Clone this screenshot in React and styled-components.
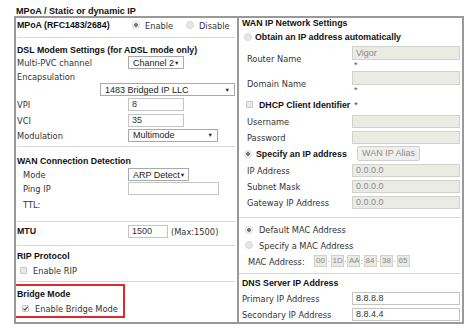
import React from 'react'
import styled, { createGlobalStyle } from 'styled-components'

const GlobalStyle = createGlobalStyle`
  html, body { margin: 0; padding: 0; background: #fff; }
  body { width: 474px; height: 333px; overflow: hidden; }
`

const arial = `'Liberation Sans', Arial, sans-serif`
const verdana = `'DejaVu Sans Condensed', 'DejaVu Sans', Verdana, sans-serif`

const Page = styled.div`
  padding: 7px 0 0 14px;
`

const Title = styled.div`
  font-family: ${arial};
  font-weight: bold;
  font-size: 9.1px;
  line-height: 9px;
  height: 9px;
  padding-left: 2px;
  color: #111;
`

const Table = styled.div`
  display: grid;
  grid-template-columns: 223px 225px;
  width: 450px;
  height: 308px;
  box-sizing: border-box;
  border: 1px solid #999;
`

const Cell = styled.div`
  border: 1px solid #999;
  overflow: hidden;
`

const Section = styled.div`
  position: relative;
  box-sizing: border-box;
  height: ${p => p.$h}px;
  padding-top: ${p => p.$pt || 0}px;
  margin: 0 ${p => p.$mr || 2}px 0 ${p => p.$ml || 0}px;
  border-bottom: ${p => (p.$last ? 'none' : '1px solid #d6d6d6')};
`

const Row = styled.div`
  display: flex;
  align-items: center;
  height: ${p => p.$h || 14}px;
  padding-left: ${p => p.$indent || 0}px;
`

const Heading = styled.span`
  font-family: ${arial};
  font-weight: bold;
  font-size: 8.8px;
  color: #111;
  white-space: nowrap;
`

const Label = styled.span`
  flex: none;
  width: ${p => (p.$w ? `${p.$w}px` : 'auto')};
  font-family: ${p => (p.$bold ? arial : verdana)};
  font-weight: ${p => (p.$bold ? 'bold' : 'normal')};
  font-size: ${p => (p.$bold ? 8.8 : 9.2)}px;
  color: ${p => (p.$bold ? '#111' : '#333')};
  white-space: nowrap;
`

const Field = styled.div`
  box-sizing: border-box;
  width: ${p => p.$w}px;
  height: ${p => p.$fh || 13}px;
  border: 1px solid ${p => (p.$off ? '#d2d2cc' : '#c4c4c4')};
  background: ${p => (p.$off ? '#ebebe6' : '#fff')};
  font-family: ${arial};
  font-size: ${p => p.$fs || 9}px;
  line-height: ${p => (p.$fh || 13) - 2}px;
  padding-left: ${p => (p.$pad !== undefined ? p.$pad : 3)}px;
  color: ${p => (p.$off ? '#8a8a8a' : '#333')};
  white-space: nowrap;
  overflow: hidden;
`

const SelectBox = styled.div`
  box-sizing: border-box;
  display: flex;
  align-items: center;
  justify-content: space-between;
  width: ${p => p.$w}px;
  height: 13px;
  border: 1px solid #a9a9a9;
  background: #fff;
  padding: 0 4px 0 4px;
  font-family: ${arial};
  font-size: 9px;
  color: #222;
  white-space: nowrap;
`

const Arrow = styled.span`
  font-size: 5.5px;
  color: #222;
`

const Radio = styled.span`
  flex: none;
  box-sizing: border-box;
  width: 8px;
  height: 8px;
  border-radius: 50%;
  margin-right: ${p => p.$gap || 5}px;
  border: 1px solid #d8d8d8;
  background: ${p => (p.$on ? 'radial-gradient(circle, #777 0 1.6px, #f4f4f4 2.2px)' : '#e6e6e6')};
`

const Check = styled.span`
  flex: none;
  position: relative;
  box-sizing: border-box;
  width: 7px;
  height: 7px;
  margin-right: ${p => p.$gap || 6}px;
  border: 1px solid #c8c8c8;
  background: ${p => (p.$on ? '#f2f2f2' : '#e8e8e8')};
  border-radius: 1px;
`

const Tick = styled.svg`
  position: absolute;
  left: -1px;
  top: -1px;
`

const Star = styled.div`
  font-family: ${arial};
  font-size: 9px;
  line-height: 11px;
  height: 11px;
  padding-left: 2px;
  color: #555;
`

const InlineStar = styled.span`
  font-family: ${arial};
  font-size: 9px;
  color: #444;
  margin-left: 4px;
`

const Stack = styled.div`
  display: flex;
  flex-direction: column;
`

const Note = styled.span`
  font-family: ${verdana};
  font-size: 9.2px;
  color: #333;
  margin-left: 3px;
`

const Button = styled.div`
  box-sizing: border-box;
  width: 63px;
  height: 15px;
  border: 1px solid #cfcfcf;
  border-radius: 2px;
  background: #efefef;
  font-family: ${arial};
  font-size: 9px;
  line-height: 13px;
  text-align: center;
  color: #8c8c8c;
`

const MacGroup = styled.div`
  display: flex;
  align-items: center;
`

const MacSep = styled.span`
  width: 3.5px;
  text-align: center;
  font-family: ${arial};
  font-size: 8px;
  color: #777;
`

const Highlight = styled.div`
  position: absolute;
  left: -7px;
  top: 2px;
  width: 115px;
  height: 34px;
  box-sizing: border-box;
  border: 2px solid #dc2a30;
`

function Checkbox({ on }) {
  return (
    <Check $on={on}>
      {on && (
        <Tick width="7" height="7" viewBox="0 0 7 7">
          <path d="M1.5 3.6 L2.9 5 L5.6 1.8" fill="none" stroke="#444" strokeWidth="1.1" />
        </Tick>
      )}
    </Check>
  )
}

function Select({ w, children }) {
  return (
    <SelectBox $w={w}>
      <span>{children}</span>
      <Arrow>▼</Arrow>
    </SelectBox>
  )
}

const macParts = ['00', '1D', 'AA', '84', '38', '65']

function LeftPanel() {
  return (
    <Cell>
      <Section $h={20} $ml={1}>
        <Row $h={14}>
          <Label $w={115} $bold>MPoA (RFC1483/2684)</Label>
          <Radio $on />
          <Label $w={41}>Enable</Label>
          <Radio />
          <Label>Disable</Label>
        </Row>
      </Section>

      <Section $h={109} $pt={5} $ml={1}>
        <Row $h={13}><Heading>DSL Modem Settings (for ADSL mode only)</Heading></Row>
        <Row $h={13}>
          <Label $w={111}>Multi-PVC channel</Label>
          <Select w={56}>Channel 2</Select>
        </Row>
        <Row $h={14}><Label>Encapsulation</Label></Row>
        <Row $h={13} $indent={83}>
          <Select w={136}>1483 Bridged IP LLC</Select>
        </Row>
        <Row $h={16}>
          <Label $w={111}>VPI</Label>
          <Field $w={56}>8</Field>
        </Row>
        <Row $h={16}>
          <Label $w={111}>VCI</Label>
          <Field $w={56}>35</Field>
        </Row>
        <Row $h={14}>
          <Label $w={111}>Modulation</Label>
          <Select w={90}>Multimode</Select>
        </Row>
      </Section>

      <Section $h={75} $pt={7} $ml={1}>
        <Row $h={14}><Heading>WAN Connection Detection</Heading></Row>
        <Row $h={13} $indent={6}>
          <Label $w={105}>Mode</Label>
          <Select w={61}>ARP Detect</Select>
        </Row>
        <Row $h={15} $indent={6}>
          <Label $w={105}>Ping IP</Label>
          <Field $w={91} />
        </Row>
        <Row $h={16} $indent={6}>
          <Label>TTL:</Label>
        </Row>
      </Section>

      <Section $h={24} $ml={1}>
        <Row $h={18}>
          <Label $w={111} $bold>MTU</Label>
          <Field $w={40}>1500</Field>
          <Note>(Max:1500)</Note>
        </Row>
      </Section>

      <Section $h={36} $pt={3} $ml={1}>
        <Row $h={14}><Heading>RIP Protocol</Heading></Row>
        <Row $h={14} $indent={3}>
          <Checkbox />
          <Label>Enable RIP</Label>
        </Row>
      </Section>

      <Section $h={40} $pt={5} $ml={1} $last>
        <Highlight />
        <Row $h={14}><Heading>Bridge Mode</Heading></Row>
        <Row $h={15} $indent={5}>
          <Checkbox on />
          <Label>Enable Bridge Mode</Label>
        </Row>
      </Section>
    </Cell>
  )
}

function RightPanel() {
  return (
    <Cell>
      <Section $h={200} $ml={0}>
        <Row $h={10} $indent={3}><Heading>WAN IP Network Settings</Heading></Row>
        <Row $h={18} $indent={5}>
          <Radio $gap={3} />
          <Heading>Obtain an IP address automatically</Heading>
        </Row>
        <Row $h={25} $indent={8}>
          <Label $w={105}>Router Name</Label>
          <Stack>
            <Field $w={108} $fh={14} $off>Vigor</Field>
            <Star>*</Star>
          </Stack>
        </Row>
        <Row $h={25} $indent={8}>
          <Label $w={105}>Domain Name</Label>
          <Stack>
            <Field $w={108} $fh={14} $off />
            <Star>*</Star>
          </Stack>
        </Row>
        <Row $h={17} $indent={7}>
          <Checkbox />
          <Heading>DHCP Client Identifier</Heading>
          <InlineStar>*</InlineStar>
        </Row>
        <Row $h={16} $indent={8}>
          <Label $w={105}>Username</Label>
          <Field $w={108} $off />
        </Row>
        <Row $h={16} $indent={8}>
          <Label $w={105}>Password</Label>
          <Field $w={108} $off />
        </Row>
        <Row $h={17} $indent={5}>
          <Radio $on $gap={4} />
          <Label $w={101} $bold>Specify an IP address</Label>
          <Button>WAN IP Alias</Button>
        </Row>
        <Row $h={16} $indent={8}>
          <Label $w={105}>IP Address</Label>
          <Field $w={108} $off>0.0.0.0</Field>
        </Row>
        <Row $h={16} $indent={8}>
          <Label $w={105}>Subnet Mask</Label>
          <Field $w={108} $off>0.0.0.0</Field>
        </Row>
        <Row $h={16} $indent={8}>
          <Label $w={105}>Gateway IP Address</Label>
          <Field $w={108} $off>0.0.0.0</Field>
        </Row>
      </Section>

      <Section $h={56} $pt={4} $ml={0}>
        <Row $h={15} $indent={6}>
          <Radio $on $gap={6} />
          <Label>Default MAC Address</Label>
        </Row>
        <Row $h={16} $indent={6}>
          <Radio $gap={6} />
          <Label>Specify a MAC Address</Label>
        </Row>
        <Row $h={16} $indent={9}>
          <Label $w={66}>MAC Address:</Label>
          <MacGroup>
            {macParts.map((m, i) => (
              <React.Fragment key={m + i}>
                {i > 0 && <MacSep>{i === 3 ? ':' : '·'}</MacSep>}
                <Field $w={13} $fh={12} $fs={8} $pad={1} $off>{m}</Field>
              </React.Fragment>
            ))}
          </MacGroup>
        </Row>
      </Section>

      <Section $h={48} $pt={2} $ml={0} $last>
        <Row $h={14} $indent={3}><Heading>DNS Server IP Address</Heading></Row>
        <Row $h={16} $indent={3}>
          <Label $w={110}>Primary IP Address</Label>
          <Field $w={108}>8.8.8.8</Field>
        </Row>
        <Row $h={16} $indent={3}>
          <Label $w={110}>Secondary IP Address</Label>
          <Field $w={108}>8.8.4.4</Field>
        </Row>
      </Section>
    </Cell>
  )
}

export default function App() {
  return (
    <>
      <GlobalStyle />
      <Page>
        <Title>MPoA / Static or dynamic IP</Title>
        <Table>
          <LeftPanel />
          <RightPanel />
        </Table>
      </Page>
    </>
  )
}
